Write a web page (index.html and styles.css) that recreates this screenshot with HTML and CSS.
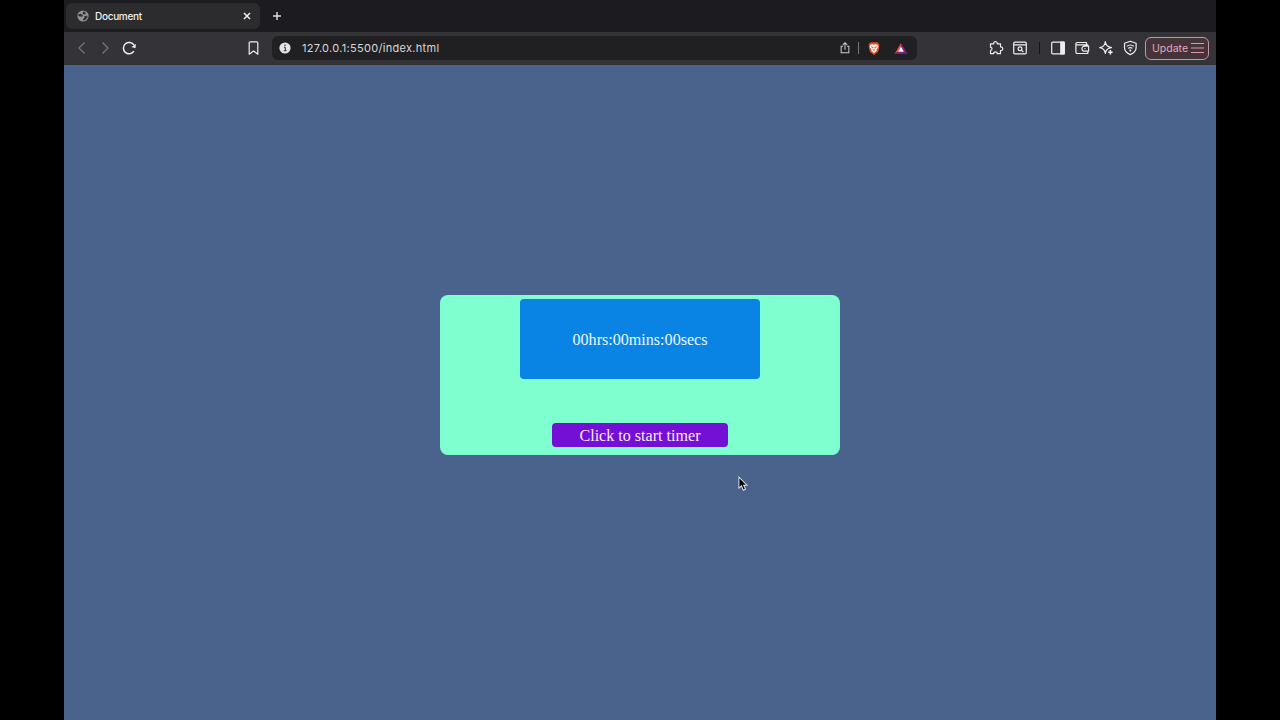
FILE: index.html
```html
<!DOCTYPE html>
<html lang="en">
<head>
  <meta charset="UTF-8">
  <meta name="viewport" content="width=device-width, initial-scale=1.0">
  <title>Document</title>
  <link rel="stylesheet" href="styles.css">
</head>
<body>
  <div class="window">
    <div class="tabs">
      <div class="tab">
        <svg class="globe" viewBox="0 0 12 12"><circle cx="6" cy="6" r="5.6" fill="#929398"/><path d="M1.4 4.2 3.4 3.8 6 5.2 5.2 6.8 3 6.6 1.2 6zM6.2 1.4l2 .6.6 1.6-1.6 1.2-1.6-1zM7 6.4l3.2-.8.4 1.4-1.8 2.6-2.2.8-.8-1.2 1.6-1.4z" fill="#303134"/></svg>
        <span class="tab-title">Document</span>
        <svg class="close" viewBox="0 0 8 8"><path d="m1 1 6 6M7 1 1 7" stroke="#eee" stroke-width="1.5"/></svg>
      </div>
      <svg class="new-tab" viewBox="0 0 10 10"><path d="M5 1v8M1 5h8" stroke="#ddd" stroke-width="1.4"/></svg>
    </div>

    <div class="toolbar">
      <svg class="icon dim" viewBox="0 0 16 16"><path d="M10.5 2.5 5 8l5.5 5.5"/></svg>
      <svg class="icon dim forward" viewBox="0 0 16 16"><path d="M5.5 2.5 11 8l-5.5 5.5"/></svg>
      <svg class="icon reload" viewBox="0 0 16 16"><path d="M12.9 11.2A5.7 5.7 0 1 1 13 5.2" stroke-width="1.5"/><path d="m14.9 4-.4 4.3-4.1-1.2z" fill="#eee" stroke="none"/></svg>
      <svg class="icon bookmark" viewBox="0 0 16 16"><path d="M4.2 2.8q0-1 1-1h6.6q1 0 1 1v11.4l-4.3-3.2-4.3 3.2z"/></svg>

      <div class="address">
        <svg class="info" viewBox="0 0 12 12"><circle cx="6" cy="6" r="5.6" fill="#e4e4e8"/><path d="M5 5.3h1.3v3.2M4.8 8.7h2.8" fill="none" stroke="#333"/><circle cx="6" cy="3.3" r=".8" fill="#333"/></svg>
        <span class="url">127.0.0.1:5500/index.html</span>
        <svg class="share" viewBox="0 0 14 16"><path d="M4.7 6H2.5v7.5h9V6H9.3M7 10V2M4.4 4.4 7 1.8l2.6 2.6"/></svg>
        <span class="line"></span>
        <svg class="brave" viewBox="0 0 14 16"><path d="M3.5 1.2h7L13 3.6l-.7 1.5.4 1.5-1.5 5L7 15l-4.2-3.4-1.5-5 .4-1.5L1 3.6z" fill="#e94b20"/><path d="m3.3 4 2.2-.6L7 4l1.5-.6 2.2.6 1 2.2-2 3 .2 1.1L7 12.8l-2.9-2.5.2-1.1-2-3z" fill="#fff"/><path d="m4 6.1 2 .5-.3 1zM10 6.1l-2 .5.3 1zM7 6v3.5M5.4 9.2 7 10l1.6-.8" fill="#e94b20" stroke="#e94b20" stroke-width=".5"/></svg>
        <svg class="bat" viewBox="0 0 14 12"><path d="M7 .5 7 5 4.5 9 .5 11.5z" fill="#f04b35"/><path d="M7 .5 13.5 11.5 9.5 9 7 5z" fill="#86208d"/><path d="M.5 11.5h13L9.5 9h-5z" fill="#73208d"/><path d="M7 4.2 9.9 9.2H4.1z" fill="#fff"/></svg>
      </div>

      <div class="tools">
        <svg class="icon" viewBox="0 0 16 16"><path d="M2.5 3.8h3.2C5.2.9 9.7.9 9.2 3.8h3.3V7c3-.5 3 4 0 3.5v3.2H9.2c.4-2.5-3.9-2.5-3.5 0H2.5v-3.2c2-.4 2-3 0-3.3z"/></svg>
        <svg class="icon" viewBox="0 0 16 16"><rect x="1.7" y="2.2" width="12.6" height="11.6" rx="1.3"/><path d="M1.7 4.8h12.6M9.5 10.3l1.9 1.8"/><circle cx="8" cy="8.8" r="1.9"/></svg>
        <span class="line dark"></span>
        <svg class="icon" viewBox="0 0 16 16"><rect x="1.7" y="2.2" width="12.6" height="11.6" rx="1"/><path d="M10.8 2.2h3.5v11.6h-3.5z" fill="#eee"/></svg>
        <svg class="icon" viewBox="0 0 16 16"><path d="M13.8 6V4.8H3.2q-1.3 0-1.3-1.1t1.3-1.2h9.3v2.3M1.9 3.7v8.2q0 1.6 1.5 1.6h10.4v-2.2M14.6 6.2v5h-4.2a2.5 2.5 0 0 1 0-5z"/><path d="M10.5 8.7h1"/></svg>
        <svg class="icon" viewBox="0 0 16 16"><path d="M7.3 1.7Q8 7 13.5 7.6 8 8.2 7.3 13.5 6.7 8.2 1.7 7.6 6.7 7 7.3 1.7z"/><path d="M12.4 10v4.4M10.2 12.2h4.4" stroke-width="1.6"/></svg>
        <svg class="icon" viewBox="0 0 16 16"><path d="m8.3 1.3 5.8 2v4.3q0 4.7-5.8 7-5.8-2.3-5.8-7V3.3z"/><path d="M4.7 6.4q3.6-2.8 7.2 0M6.1 8.4q2.2-1.7 4.4 0"/><circle cx="8.3" cy="10.4" r="1" fill="#eee" stroke="none"/></svg>
        <div class="update">
          <span>Update</span>
          <svg class="menu" viewBox="0 0 13 12"><path d="M0 1.5h13M0 6h13M0 10.5h13"/></svg>
        </div>
      </div>
    </div>

    <div class="page">
      <div class="container">
        <div class="timer">00hrs:00mins:00secs</div>
        <button class="start">Click to start timer</button>
      </div>
    </div>
  </div>
  <svg class="cursor" viewBox="0 0 12 17"><path d="M1 1v12.1l2.8-2.5 2 4.7 2.4-1-2-4.5h3.6z" fill="#000" stroke="#dce3ed" stroke-width="1.1"/></svg>
</body>
</html>
```

FILE: styles.css
```css
* {
  box-sizing: border-box;
}

body {
  margin: 0;
  background: #000;
  overflow: hidden;
}

.window {
  width: 1152px;
  height: 720px;
  margin: 0 auto;
  display: flex;
  flex-direction: column;
  font-family: Inter, "Liberation Sans", sans-serif;
}

svg {
  display: block;
  flex-shrink: 0;
}

.tabs {
  height: 32px;
  padding: 3px 2px;
  display: flex;
  align-items: center;
  background: #1c1b20;
}

.tab {
  width: 194px;
  height: 26px;
  padding: 0 9px 0 11px;
  display: flex;
  align-items: center;
  border-radius: 6px;
  background: #2c2c2f;
}

.globe {
  width: 12px;
  height: 12px;
}

.tab-title {
  margin-left: 6px;
  flex: 1;
  font-size: 10px;
  font-weight: 500;
  letter-spacing: -0.3px;
  color: #eee;
}

.close {
  width: 8px;
  height: 8px;
}

.new-tab {
  width: 10px;
  height: 10px;
  margin-left: 12px;
}

.toolbar {
  height: 33px;
  padding: 0 7px 1px 10px;
  display: flex;
  align-items: center;
  background: #343438;
}

.icon {
  width: 16px;
  height: 16px;
  fill: none;
  stroke: #eee;
  stroke-width: 1.2;
  stroke-linejoin: round;
}

.dim {
  stroke: #77777b;
}

.forward {
  margin-left: 7px;
}

.reload {
  margin-left: 8px;
}

.bookmark {
  margin-left: 108px;
}

.address {
  width: 645px;
  height: 24px;
  margin-left: 11px;
  padding: 0 9px 0 7px;
  display: flex;
  align-items: center;
  border-radius: 6px;
  background: #202023;
}

.info {
  width: 12px;
  height: 12px;
}

.url {
  flex: 1;
  margin-left: 11px;
  font-size: 11px;
  letter-spacing: 0.3px;
  color: #d8d8da;
}

.share {
  width: 12px;
  height: 14px;
  fill: none;
  stroke: #ccc;
  stroke-width: 1.2;
}

.line {
  width: 1px;
  height: 12px;
  margin-left: 7px;
  background: #77777b;
}

.brave {
  width: 14px;
  height: 15px;
  margin-left: 8px;
}

.bat {
  width: 14px;
  height: 13px;
  margin-left: 13px;
}

.tools {
  margin-left: auto;
  display: flex;
  align-items: center;
  gap: 8px;
}

.dark {
  margin: 0 2px 0 3px;
  background: #17171a;
}

.update {
  width: 64px;
  height: 23px;
  margin-left: -1px;
  padding: 0 4px 0 6px;
  display: flex;
  align-items: center;
  justify-content: space-between;
  border: 1px solid #c895a6;
  border-radius: 6px;
  background: #443439;
  font-size: 10.5px;
  color: #e5a5b9;
}

.menu {
  width: 13px;
  height: 12px;
  stroke: #d99bad;
  stroke-width: 1.1;
}

.page {
  flex: 1;
  display: flex;
  justify-content: center;
  align-items: center;
  padding-bottom: 35px;
  background: #4a638c;
}

.container {
  width: 400px;
  height: 160px;
  padding: 4px 0 8px;
  display: flex;
  flex-direction: column;
  justify-content: space-between;
  align-items: center;
  border-radius: 8px;
  background: #7fffd0;
}

.timer {
  width: 240px;
  height: 80px;
  padding-top: 2px;
  display: flex;
  justify-content: center;
  align-items: center;
  border-radius: 4px;
  background: #0a84e4;
  color: #e9f7ff;
  font-family: "Liberation Serif", serif;
  font-size: 16.1px;
}

.start {
  width: 176px;
  height: 24px;
  padding: 2px 0 0;
  border: none;
  border-radius: 4px;
  background: #740fd5;
  color: #f8e9ff;
  font-family: "Liberation Serif", serif;
  font-size: 16.1px;
}

.cursor {
  position: absolute;
  left: 738px;
  top: 476px;
  width: 11px;
  height: 16px;
}
```
